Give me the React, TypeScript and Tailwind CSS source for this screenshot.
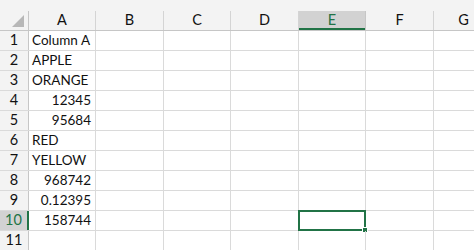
import React from 'react';

const cols = ['A', 'B', 'C', 'D', 'E', 'F', 'G'];
const widths = [67, 68, 67, 68, 67, 68, 60];

type Cell = { text: string; right?: boolean };

const data: Cell[] = [
  { text: 'Column A' },
  { text: 'APPLE' },
  { text: 'ORANGE' },
  { text: '12345', right: true },
  { text: '95684', right: true },
  { text: 'RED' },
  { text: 'YELLOW' },
  { text: '968742', right: true },
  { text: '0.12395', right: true },
  { text: '158744', right: true },
  { text: '' },
];

const App: React.FC = () => {
  const font = { fontFamily: 'Lato, "Open Sans", sans-serif' };
  return (
    <div className="w-[474px] h-[250px] overflow-hidden bg-white text-[13.5px] text-[#111] whitespace-nowrap" style={font}>
      <div className="h-[11px] bg-[#f3f3f3]" />
      {/* column headers */}
      <div className="flex h-[20px] bg-[#f3f3f3] border-b border-[#c6c6c6]">
        <div className="w-[29px] shrink-0 border-r border-[#c6c6c6] relative">
          <svg className="absolute right-[4px] bottom-[3px]" width="12" height="12" viewBox="0 0 12 12">
            <polygon points="12,0 12,12 0,12" fill="#b7b7b7" />
          </svg>
        </div>
        {cols.map((c, i) => (
          <div
            key={c}
            style={{ width: widths[i] }}
            className={`shrink-0 flex items-center justify-center border-r leading-none text-[14.5px] ${
              c === 'E'
                ? 'bg-[#d2d2d2] border-[#c6c6c6] text-[#217346] shadow-[inset_0_-2px_0_#217346]'
                : 'border-[#d4d4d4] text-[#111]'
            }`}
          >
            {c}
          </div>
        ))}
      </div>
      {data.map((cell, r) => {
        const selRow = r === 9;
        return (
          <div key={r} className="flex h-[20px] border-b border-[#dadada]">
            <div
              className={`w-[29px] shrink-0 flex items-center justify-center border-r leading-none text-[14.5px] ${
                selRow
                  ? 'bg-[#d2d2d2] text-[#217346] border-r-2 border-[#217346]'
                  : 'bg-[#f3f3f3] border-[#c6c6c6] text-[#111]'
              }`}
            >
              {r + 1}
            </div>
            {cols.map((c, i) => {
              const sel = selRow && c === 'E';
              return (
                <div
                  key={c}
                  style={{ width: widths[i] }}
                  className={`shrink-0 flex items-center border-r border-[#dadada] leading-none relative ${
                    i === 0 && cell.right ? 'justify-end pr-[4px]' : 'pl-[3px]'
                  }`}
                >
                  {i === 0 ? cell.text : ''}
                  {sel && (
                    <div className="absolute -left-[1px] -top-[1px] w-[68px] h-[21px] border-2 border-[#217346]">
                      <div className="absolute -right-[4px] -bottom-[4px] w-[6px] h-[6px] bg-[#217346] border border-white" />
                    </div>
                  )}
                </div>
              );
            })}
          </div>
        );
      })}
    </div>
  );
};

export default App;
